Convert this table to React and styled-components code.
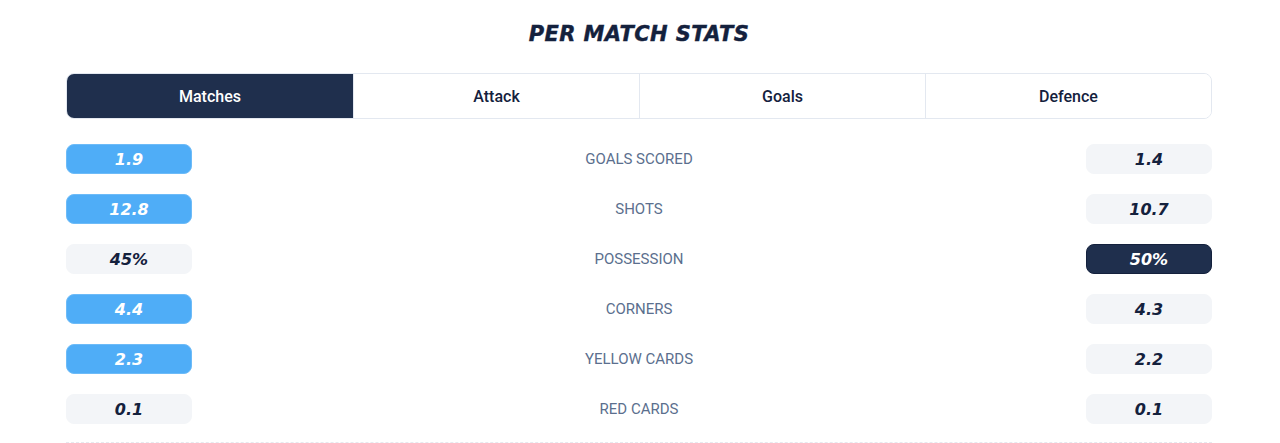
import React, { useState } from 'react'
import styled, { createGlobalStyle } from 'styled-components'

const stats = [
  { label: 'Goals scored', home: '1.9', away: '1.4', better: 'home' },
  { label: 'Shots', home: '12.8', away: '10.7', better: 'home' },
  { label: 'Possession', home: '45%', away: '50%', better: 'away' },
  { label: 'Corners', home: '4.4', away: '4.3', better: 'home' },
  { label: 'Yellow cards', home: '2.3', away: '2.2', better: 'home' },
  { label: 'Red cards', home: '0.1', away: '0.1', better: null },
]

const tabs = ['Matches', 'Attack', 'Goals', 'Defence']

export default function App() {
  const [active, setActive] = useState('Matches')

  return (
    <>
      <GlobalStyle />
      <Wrapper>
        <Title>PER MATCH STATS</Title>
        <Tabs>
          {tabs.map((t) => (
            <Tab key={t} $active={t === active} onClick={() => setActive(t)}>
              {t}
            </Tab>
          ))}
        </Tabs>
        <Rows>
          {stats.map((s) => (
            <Row key={s.label}>
              <Value $variant={s.better === 'home' ? 'blue' : 'plain'}>{s.home}</Value>
              <Label>{s.label}</Label>
              <Value $variant={s.better === 'away' ? 'dark' : 'plain'}>{s.away}</Value>
            </Row>
          ))}
        </Rows>
        <Divider />
      </Wrapper>
    </>
  )
}

const GlobalStyle = createGlobalStyle`
  body {
    margin: 0;
    background: #fff;
    font-family: Roboto, "Liberation Sans", sans-serif;
  }
`

const Wrapper = styled.div`
  width: 1146px;
  margin: 0 auto;
  padding-right: 2px;
  padding-top: 20px;
`

const Title = styled.h2`
  margin: 0 0 25px;
  text-align: center;
  font-family: "DejaVu Sans", sans-serif;
  font-style: italic;
  font-weight: 700;
  font-size: 21px;
  line-height: 28px;
  letter-spacing: 0.4px;
  color: #14213d;
  -webkit-text-stroke: 0.4px #14213d;
`

const Tabs = styled.div`
  display: grid;
  grid-template-columns: repeat(4, 1fr);
  height: 46px;
  border: 1px solid #e3e8f0;
  border-radius: 8px;
  overflow: hidden;
  box-sizing: border-box;
`

const Tab = styled.button`
  border: none;
  border-left: 1px solid #e3e8f0;
  background: ${(p) => (p.$active ? '#1f2f4d' : '#fff')};
  color: ${(p) => (p.$active ? '#fff' : '#14213d')};
  font-family: Roboto, sans-serif;
  font-weight: 500;
  font-size: 16px;
  cursor: pointer;
  padding: 0;

  &:first-child {
    border-left: none;
  }
`

const Rows = styled.div`
  display: flex;
  flex-direction: column;
  gap: 20px;
  margin-top: 25px;
`

const Row = styled.div`
  display: flex;
  align-items: center;
  justify-content: space-between;
  height: 30px;
`

const variants = {
  blue: { bg: '#4fadf7', border: '#6dbbf8', color: '#fff' },
  dark: { bg: '#1f2f4d', border: '#14213d', color: '#fff' },
  plain: { bg: '#f3f5f8', border: '#f3f5f8', color: '#14213d' },
}

const Value = styled.div`
  width: 126px;
  height: 30px;
  box-sizing: border-box;
  display: flex;
  align-items: center;
  justify-content: center;
  border-radius: 8px;
  background: ${(p) => variants[p.$variant].bg};
  border: 1px solid ${(p) => variants[p.$variant].border};
  color: ${(p) => variants[p.$variant].color};
  font-family: "DejaVu Sans", sans-serif;
  font-style: italic;
  font-weight: 700;
  font-size: 16px;
`

const Label = styled.div`
  font-family: Roboto, sans-serif;
  font-size: 15px;
  text-transform: uppercase;
  color: #5b6f8e;
`

const Divider = styled.div`
  margin-top: 18px;
  border-top: 1px dashed #e6e9ef;
`
